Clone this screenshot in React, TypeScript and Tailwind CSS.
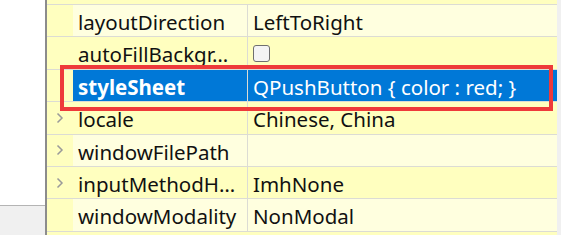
import React from 'react';

type Row = {
  name: string;
  value?: string;
  dark: boolean;
  arrow?: boolean;
  selected?: boolean;
  checkbox?: boolean;
};

const rows: Row[] = [
  { name: 'layoutDirection', value: 'LeftToRight', dark: false },
  { name: 'autoFillBackgr…', dark: true, checkbox: true },
  { name: 'styleSheet', value: 'QPushButton { color : red; }', dark: false, selected: true },
  { name: 'locale', value: 'Chinese, China', dark: true, arrow: true },
  { name: 'windowFilePath', value: '', dark: false, arrow: true },
  { name: 'inputMethodH…', value: 'ImhNone', dark: true, arrow: true },
  { name: 'windowModality', value: 'NonModal', dark: false },
];

const Chevron = () => (
  <svg width="8" height="12" viewBox="0 0 8 12" className="text-[#9a9a9a]">
    <path d="M1.5 1.5 L6 6 L1.5 10.5" fill="none" stroke="currentColor" strokeWidth="1.5" />
  </svg>
);

const PropertyRow: React.FC<{ row: Row }> = ({ row }) => {
  const bg = row.selected ? 'bg-[#0078d7]' : row.dark ? 'bg-[#ffffbf]' : 'bg-[#ffffdf]';
  return (
    <div className="flex h-[32.4px] border-b border-[#dcdcd4]">
      <div className="w-[26px] bg-[#ffffbf] flex items-center justify-center shrink-0">
        {row.arrow && <Chevron />}
      </div>
      <div
        className={`w-[175px] shrink-0 flex items-center pl-[5px] pt-[3px] border-r border-[#dcdcd4] whitespace-nowrap overflow-hidden ${bg} ${
          row.selected ? 'text-white font-bold' : 'text-[#111]'
        }`}
      >
        {row.name}
      </div>
      <div className={`flex-1 flex items-center pl-[5px] pt-[3px] whitespace-nowrap ${bg} ${row.selected ? 'text-white' : 'text-[#111]'}`}>
        {row.checkbox ? (
          <div className="w-[17px] h-[17px] -mt-[2px] rounded-[3px] border border-[#6f6f6f] bg-[#f4f4f4]" />
        ) : (
          row.value
        )}
      </div>
    </div>
  );
};

export default function App() {
  return (
    <div
      className="relative w-[561px] h-[235px] overflow-hidden flex bg-white text-[20.5px]"
      style={{ fontFamily: '"Noto Sans", "Open Sans", sans-serif' }}
    >
      {/* Left panel */}
      <div className="w-[45px] shrink-0 flex flex-col">
        <div className="h-[205px] bg-white" />
        <div className="flex-1 border-t border-[#b4b4b4] bg-[#f0f0f0]" />
      </div>
      <div className="w-[2px] bg-[#8c8c8c] shrink-0" />

      {/* Property table */}
      <div className="flex-1 flex flex-col leading-none">
        <div className="h-[5px] bg-[#ffffbf] border-b border-[#dcdcd4] shrink-0" />
        {rows.map((r) => (
          <PropertyRow key={r.name} row={r} />
        ))}
        <div className="flex-1 bg-[#ffffbf]" />
      </div>

      {/* Scrollbar strip */}
      <div className="w-[4px] bg-[#f0f0f0] shrink-0" />

      {/* Red annotation box */}
      <div className="absolute left-[60px] top-[65px] w-[493px] h-[46px] border-[4px] border-[#ee3a3a]" />
    </div>
  );
}
